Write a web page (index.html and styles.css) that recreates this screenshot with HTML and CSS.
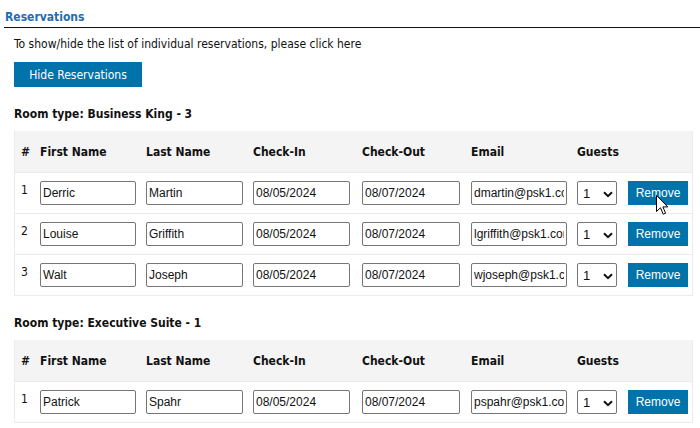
FILE: index.html
```html
<!DOCTYPE html>
<html>
<head>
<meta charset="utf-8">
<link rel="stylesheet" href="styles.css">
</head>
<body>
<h2 class="title">Reservations</h2>
<div class="content">
  <p class="intro">To show/hide the list of individual reservations, please click here</p>
  <button class="btn-hide">Hide Reservations</button>

  <h3 class="room">Room type: Business King - 3</h3>
  <div class="grid">
    <div class="row head">
      <div>#</div><div>First Name</div><div>Last Name</div><div>Check-In</div><div>Check-Out</div><div>Email</div><div>Guests</div><div></div>
    </div>
    <div class="row">
      <div class="num">1</div>
      <div><input class="f-first" value="Derric"></div>
      <div><input class="f-last" value="Martin"></div>
      <div><input class="f-in" value="08/05/2024"></div>
      <div><input class="f-out" value="08/07/2024"></div>
      <div><input class="f-email" value="dmartin@psk1.com"></div>
      <div><select class="f-guests"><option>1</option></select></div>
      <div class="act"><button class="btn-remove">Remove</button></div>
    </div>
    <div class="row">
      <div class="num">2</div>
      <div><input class="f-first" value="Louise"></div>
      <div><input class="f-last" value="Griffith"></div>
      <div><input class="f-in" value="08/05/2024"></div>
      <div><input class="f-out" value="08/07/2024"></div>
      <div><input class="f-email" value="lgriffith@psk1.com"></div>
      <div><select class="f-guests"><option>1</option></select></div>
      <div><button class="btn-remove">Remove</button></div>
    </div>
    <div class="row">
      <div class="num">3</div>
      <div><input class="f-first" value="Walt"></div>
      <div><input class="f-last" value="Joseph"></div>
      <div><input class="f-in" value="08/05/2024"></div>
      <div><input class="f-out" value="08/07/2024"></div>
      <div><input class="f-email" value="wjoseph@psk1.com"></div>
      <div><select class="f-guests"><option>1</option></select></div>
      <div><button class="btn-remove">Remove</button></div>
    </div>
  </div>

  <h3 class="room">Room type: Executive Suite - 1</h3>
  <div class="grid">
    <div class="row head">
      <div>#</div><div>First Name</div><div>Last Name</div><div>Check-In</div><div>Check-Out</div><div>Email</div><div>Guests</div><div></div>
    </div>
    <div class="row">
      <div class="num">1</div>
      <div><input class="f-first" value="Patrick"></div>
      <div><input class="f-last" value="Spahr"></div>
      <div><input class="f-in" value="08/05/2024"></div>
      <div><input class="f-out" value="08/07/2024"></div>
      <div><input class="f-email" value="pspahr@psk1.com"></div>
      <div><select class="f-guests"><option>1</option></select></div>
      <div><button class="btn-remove">Remove</button></div>
    </div>
  </div>
</div>
<svg class="cursor" width="13" height="20" viewBox="0 0 13 20"><path d="M0.5 0.5 L0.5 16.5 L4.5 12.8 L7.2 19.2 L9.6 18.2 L6.9 11.9 L11.8 11.9 Z" fill="#fff" stroke="#000" stroke-width="1"/></svg>
</body>
</html>
```

FILE: styles.css
```css
* { box-sizing: border-box; }
body {
  margin: 0;
  font-family: "DejaVu Sans Condensed", "DejaVu Sans", sans-serif;
  font-size: 12px;
  color: #111;
  background: #fff;
  position: relative;
}
.title {
  margin: 0 0 0 4px;
  padding: 10px 0 2px 1px;
  border-bottom: 1px solid #111;
  color: #236cb5;
  font-size: 12px;
  font-weight: bold;
  line-height: 15px;
}
.content {
  padding: 0 7px 0 14px;
}
.intro {
  margin: 9px 0 0;
  line-height: 15px;
}
.btn-hide {
  display: block;
  margin: 10px 0 0;
  width: 128px;
  height: 25px;
  border: 0;
  background: #0073aa;
  color: #fff;
  font-family: inherit;
  font-size: 12px;
  padding: 0;
}
.room {
  margin: 20px 0 9px;
  font-size: 12px;
  font-weight: bold;
  line-height: 15px;
}
.grid {
  border: 1px solid #ebebeb;
  border-top: 0;
}
.row {
  display: grid;
  grid-template-columns: 19px 106px 107px 109px 109px 106px 51px 66px;
  padding: 8px 0 0 6px;
  height: 41px;
  border-top: 1px solid #ebebeb;
  align-items: start;
}
.row.head {
  background: #f4f4f4;
  padding-top: 0;
  align-items: center;
  font-weight: bold;
  border-top: 0;
}
.num {
  padding-top: 2px;
  line-height: 15px;
}
input {
  display: block;
  height: 24px;
  border: 1px solid #767676;
  border-radius: 2px;
  padding: 0 2px;
  font-family: "Liberation Sans", Arial, sans-serif;
  font-size: 12px;
  color: #111;
  background: #fff;
  margin: 0;
}
.f-first { width: 96px; }
.f-last { width: 97px; }
.f-in { width: 97px; }
.f-out { width: 98px; }
.f-email { width: 96px; }
.f-guests {
  display: block;
  width: 40px;
  height: 24px;
  margin: 0;
  border: 1px solid #767676;
  border-radius: 2px;
  padding: 0 0 0 5px;
  font-family: "Liberation Sans", Arial, sans-serif;
  font-size: 13px;
  color: #111;
  -webkit-appearance: none;
  appearance: none;
  background: #fff url("data:image/svg+xml,%3Csvg xmlns='http://www.w3.org/2000/svg' width='10' height='7' viewBox='0 0 10 7'%3E%3Cpath d='M1 1.2 L5 5.2 L9 1.2' fill='none' stroke='%23111' stroke-width='2'/%3E%3C/svg%3E") no-repeat 25px 9px;
}
.btn-remove {
  display: block;
  width: 60px;
  height: 24px;
  border: 0;
  padding: 0;
  background: #0073aa;
  color: #fff;
  font-family: "Liberation Sans", Arial, sans-serif;
  font-size: 12px;
}
.cursor {
  position: absolute;
  left: 656px;
  top: 195px;
}
```
